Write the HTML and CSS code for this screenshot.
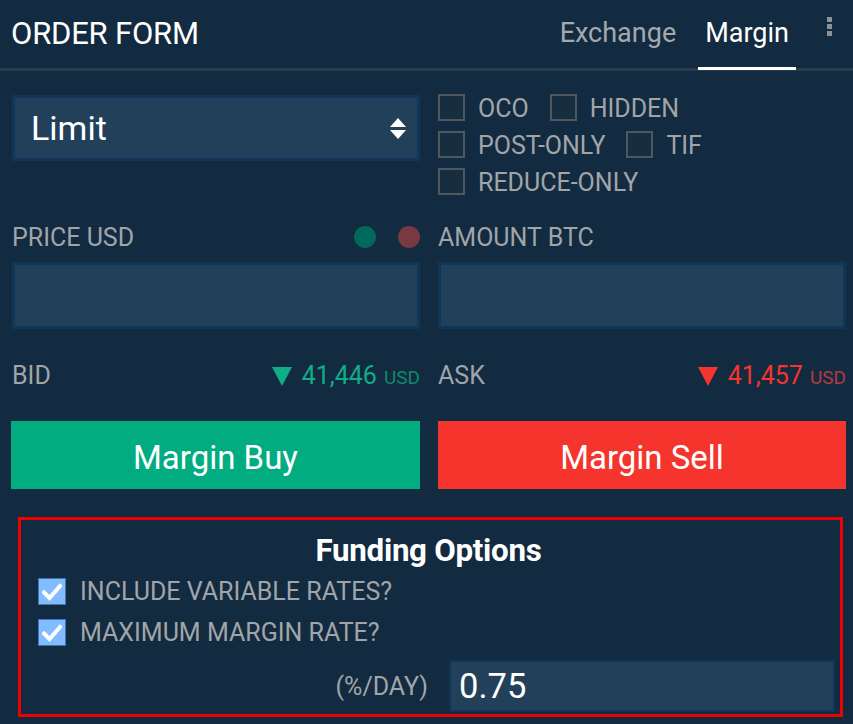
FILE: index.html
```html
<!DOCTYPE html>
<html>
<head>
<meta charset="utf-8">
<link rel="stylesheet" href="styles.css">
</head>
<body>
<div class="panel">
  <header class="header">
    <div class="title">ORDER FORM</div>
    <nav class="tabs">
      <div class="tab">Exchange</div>
      <div class="tab active">Margin</div>
    </nav>
    <div class="more"><span></span><span></span><span></span></div>
  </header>

  <main class="form">
    <div class="row row-top">
      <div class="select">
        <span>Limit</span>
        <svg class="updown" width="16" height="21" viewBox="0 0 16 21"><path d="M0 9 L8 0 L16 9 Z M0 12 L16 12 L8 21 Z" fill="#fff"/></svg>
      </div>
      <div class="opts">
        <div class="opt-line">
          <label class="opt"><span class="box"></span>OCO</label>
          <label class="opt"><span class="box"></span>HIDDEN</label>
        </div>
        <div class="opt-line">
          <label class="opt"><span class="box"></span>POST-ONLY</label>
          <label class="opt"><span class="box"></span>TIF</label>
        </div>
        <div class="opt-line">
          <label class="opt"><span class="box"></span>REDUCE-ONLY</label>
        </div>
      </div>
    </div>

    <div class="row row-labels">
      <div class="label-line">
        <span class="label">PRICE USD</span>
        <span class="dots"><span class="dot green"></span><span class="dot red"></span></span>
      </div>
      <div class="label-line">
        <span class="label">AMOUNT BTC</span>
      </div>
    </div>

    <div class="row row-inputs">
      <div class="input"></div>
      <div class="input"></div>
    </div>

    <div class="row row-quotes">
      <div class="quote">
        <span class="label">BID</span>
        <span class="price bid">
          <svg class="tri" width="20" height="19" viewBox="0 0 20 19"><path d="M0 0 H20 L10 19 Z" fill="#0fae87"/></svg>
          <span class="num">41,446</span><span class="cur">USD</span>
        </span>
      </div>
      <div class="quote">
        <span class="label">ASK</span>
        <span class="price ask">
          <svg class="tri" width="20" height="19" viewBox="0 0 20 19"><path d="M0 0 H20 L10 19 Z" fill="#f5342e"/></svg>
          <span class="num">41,457</span><span class="cur">USD</span>
        </span>
      </div>
    </div>

    <div class="row row-buttons">
      <div class="btn buy">Margin Buy</div>
      <div class="btn sell">Margin Sell</div>
    </div>

    <section class="funding">
      <h2 class="f-title">Funding Options</h2>
      <label class="check"><span class="cbox"><svg width="20" height="18" viewBox="0 0 20 18"><path d="M2 9.5 L7.5 15 L18 3" fill="none" stroke="#fff" stroke-width="4" stroke-linecap="square"/></svg></span>INCLUDE VARIABLE RATES?</label>
      <label class="check second"><span class="cbox"><svg width="20" height="18" viewBox="0 0 20 18"><path d="M2 9.5 L7.5 15 L18 3" fill="none" stroke="#fff" stroke-width="4" stroke-linecap="square"/></svg></span>MAXIMUM MARGIN RATE?</label>
      <div class="rate-line">
        <span class="rate-label">(%/DAY)</span>
        <div class="rate-input">0.75</div>
      </div>
    </section>
  </main>
</div>
</body>
</html>
```
FILE: styles.css
```css
* { box-sizing: border-box; }
html, body {
  margin: 0;
  padding: 0;
  background: #132b40;
}
body {
  font-family: Roboto, "Liberation Sans", sans-serif;
  width: 853px;
  height: 724px;
  overflow: hidden;
}
.panel { width: 853px; }

.header {
  height: 71px;
  display: flex;
  align-items: stretch;
  border-bottom: 3px solid #2a3c4b;
}
.title {
  font-size: 31px;
  color: #fff;
  padding-left: 11px;
  display: flex;
  align-items: center;
  padding-bottom: 2px;
  letter-spacing: -0.2px;
}
.tabs {
  margin-left: auto;
  display: flex;
  align-items: stretch;
  gap: 13px;
}
.tab {
  font-size: 27px;
  color: #a4a9ae;
  padding: 0 7px;
  display: flex;
  align-items: center;
  padding-bottom: 2px;
  border-bottom: 3px solid transparent;
  margin-bottom: -2px;
}
.tab:first-child { padding-right: 9px; }
.tab.active {
  color: #fff;
  border-bottom-color: #fff;
}
.more {
  margin: 17px 21px 0 31px;
  display: flex;
  flex-direction: column;
  gap: 2px;
}
.more span {
  width: 5px;
  height: 5px;
  background: #8c9299;
}

.form {
  padding: 24px 7px 0 12px;
}
.row {
  display: grid;
  grid-template-columns: 408px 408px;
  column-gap: 18px;
}
.select {
  height: 66px;
  background: #22405a;
  border: 3px solid #0f3658;
  display: flex;
  align-items: center;
  justify-content: space-between;
  padding: 0 11px 0 16px;
  color: #fff;
  font-size: 34px;
}
.opts {
  display: flex;
  flex-direction: column;
  gap: 10px;
  margin-top: -1px;
}
.opt-line {
  display: flex;
  gap: 21px;
  height: 27px;
}
.opt {
  display: flex;
  align-items: center;
  gap: 13px;
  font-size: 25px;
  color: #a1a5a9;
  padding-top: 1px;
}
.box {
  width: 27px;
  height: 27px;
  border: 2px solid #4f575f;
  background: #172e40;
  margin-top: -1px;
}

.row-labels { margin-top: 29px; height: 28px; }
.label-line {
  display: flex;
  align-items: center;
  justify-content: space-between;
}
.label {
  font-size: 25px;
  color: #a1a5a9;
  line-height: 28px;
}
.dots { display: flex; gap: 22px; margin-top: -2px; }
.dot {
  width: 22px;
  height: 22px;
  border-radius: 50%;
}
.dot.green { background: #00695b; }
.dot.red { background: #7a3842; }

.row-inputs { margin-top: 10px; }
.input {
  height: 67px;
  background: #22405a;
  border: 3px solid #0f3658;
}

.row-quotes { margin-top: 33px; height: 28px; }
.quote {
  display: flex;
  justify-content: space-between;
  align-items: center;
}
.price {
  display: flex;
  align-items: center;
}
.tri { margin-right: 10px; }
.num { font-size: 25px; line-height: 28px; }
.cur { font-size: 19px; margin-left: 7px; margin-top: 3px; }
.bid .num { color: #0fae87; }
.bid .cur { color: #0b8a6d; }
.ask .num { color: #f5342e; }
.ask .cur { color: #b23b3f; }

.row-buttons { margin-top: 31px; }
.btn {
  height: 68px;
  display: flex;
  align-items: center;
  justify-content: center;
  color: #fff;
  font-size: 33px;
  padding-top: 4px;
}
.btn.buy { background: #00ac80; margin-left: -1px; }
.btn.sell { background: #f5342e; }

.funding {
  margin: 28px 3px 0 6px;
  height: 200px;
  border: 3px solid #f00000;
  padding: 13px 5px 0 17px;
}
.f-title {
  margin: 0;
  text-align: center;
  font-size: 31.3px;
  font-weight: 700;
  color: #fff;
  line-height: 36px;
  padding-right: 16px;
  letter-spacing: -0.3px;
}
.check {
  display: flex;
  align-items: center;
  gap: 14px;
  font-size: 25px;
  color: #a1a5a9;
  height: 27px;
  margin-top: 9px;
}
.check.second { margin-top: 14px; }
.cbox {
  width: 28px;
  height: 27px;
  background: #80bcff;
  border: 1px solid #3f74ad;
  display: flex;
  align-items: center;
  justify-content: center;
}
.rate-line {
  display: flex;
  justify-content: flex-end;
  align-items: center;
  gap: 21px;
  margin-top: 14px;
}
.rate-label {
  font-size: 25px;
  color: #a1a5a9;
}
.rate-input {
  width: 386px;
  height: 52px;
  background: #22405a;
  border: 2px solid #0f3658;
  color: #fff;
  font-size: 34.5px;
  display: flex;
  align-items: center;
  padding-left: 8px;
}
```
